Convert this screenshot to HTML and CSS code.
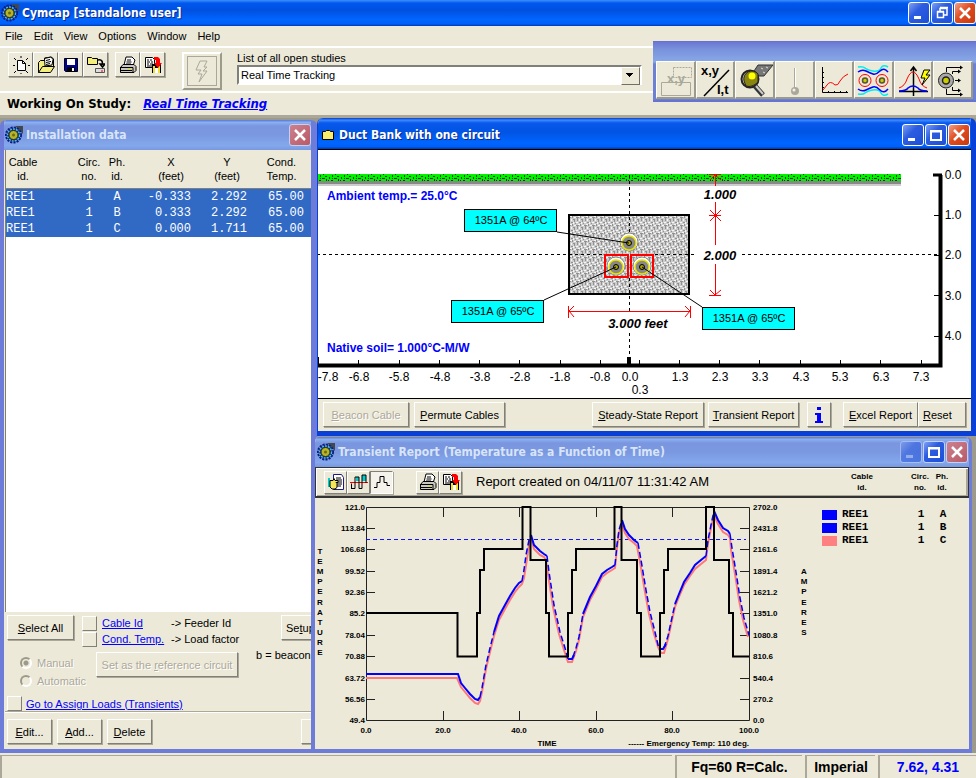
FILE: index.html
```html
<!DOCTYPE html>
<html lang="en">
<head>
<meta charset="utf-8">
<title>Cymcap [standalone user]</title>
<link rel="stylesheet" href="styles.css">
</head>
<body>
<svg class="defs" aria-hidden="true">
  <defs>
    <symbol id="logo" viewBox="0 0 18 18">
      <path d="M10 0h8v8l-3-3z" fill="#3e4a50"/>
      <circle cx="8.500" cy="9" r="7" fill="#103060" stroke="#0a1c80" stroke-width="3" stroke-dasharray="2 1"/>
      <circle cx="8.500" cy="9" r="6" fill="none" stroke="#50b8e8" stroke-width="1.500" stroke-dasharray="2 1"/>
      <circle cx="8.500" cy="9" r="4.500" fill="#b8b428" stroke="#24301c"/>
      <circle cx="8.500" cy="9" r="1.500" fill="#6c6c18"/>
    </symbol>
    <symbol id="printer" viewBox="0 0 18 18">
      <path d="M5 9 7 1h6l3 3-2 6z" fill="#fff" stroke="#000"/>
      <path d="M8 4h4M7.500 6h5M7 8h5" stroke="#000"/>
      <path d="M1.500 11.500 4 8.500h11l2 2v4l-2 2H1.500z" fill="#c8c8c0" stroke="#000"/>
      <path d="M1 11.500h13v5M2 14.500h11" fill="none" stroke="#000"/>
      <path d="M9 13h3" stroke="#e8e000"/>
    </symbol>
    <symbol id="copy" viewBox="0 0 18 18">
      <path d="M1.500 1.500h7l2 2v8h-9z" fill="#fff" stroke="#000"/>
      <path d="M3 4h2M6 4h2M3 6h3M7 6h2M3 8h2M6 8h3M3 10h5" stroke="#000"/>
      <path d="M8 8h9v9H8z" fill="#000"/>
      <path d="M9 10h2v7H9zM14 10h2v7h-2z" fill="#f0e030"/>
      <path d="M11 12h3v5h-3z" fill="#fff"/>
      <path d="M10 1h4l2 2v4h2l-4 5-4-5h2V4h-2z" fill="#f00"/>
    </symbol>
    <symbol id="cable" viewBox="-10 -10 20 20">
      <circle r="9" fill="#fff" stroke="#888"/>
      <circle cy="1" r="7" fill="#888" stroke="#e8e000" stroke-width="1.500"/>
      <circle cy="1" r="2.500" fill="#a8a000" stroke="#000"/>
    </symbol>
    <pattern id="grass" width="12" height="7" patternUnits="userSpaceOnUse">
      <rect width="12" height="7" fill="#00f000"/>
      <path d="M1 1h2v1h-2zM5 2h1v2h-1zM8 0h1v2h-1zM10 3h2v1h-2zM2 4h1v2h-1zM7 5h2v1h-2zM4 5h1v1h-1zM0 3h1v1h-1zM11 6h1v1h-1zM8 3h1v1h-1z" fill="#103810"/>
    </pattern>
    <pattern id="concrete" width="8" height="8" patternUnits="userSpaceOnUse">
      <rect width="8" height="8" fill="#ccc"/>
      <path d="M0 1h3v1h-3zM1 2h1v3h-1zM4 0h1v2h-1zM5 3h2v1h-2zM6 4h1v2h-1zM3 6h2v1h-2zM7 7h1v1h-1z" fill="#909090"/>
      <path d="M2 0h2v1h-2zM3 3h1v2h-1zM0 6h2v1h-2zM6 1h2v1h-2zM5 6h1v2h-1z" fill="#f6f6f6"/>
    </pattern>
  </defs>
</svg>

<header class="titlebar main-title">
  <svg class="logo"><use href="#logo"/></svg>
  <h1>Cymcap [standalone user]</h1>
  <div class="caption-buttons">
    <button class="cap" aria-label="Minimize"><svg viewBox="0 0 20 20"><path d="M5 13h7v3H5z" fill="#fff"/></svg></button>
    <button class="cap" aria-label="Restore"><svg viewBox="0 0 20 20"><path d="M8 8V5.500h7V12h-3M8 4.500h8M5.500 9h6v5.500h-6zM5 8.500h7" fill="none" stroke="#fff" stroke-width="1.500"/></svg></button>
    <button class="cap close" aria-label="Close"><svg viewBox="0 0 20 20"><path d="m5 5 10 10M15 5 5 15" stroke="#fff" stroke-width="2.500"/></svg></button>
  </div>
</header>

<nav class="menu">
  <button>File</button><button>Edit</button><button>View</button><button>Options</button><button>Window</button><button>Help</button>
</nav>

<div class="toolbar">
  <div class="tools">
    <button class="tool" aria-label="New study"><svg viewBox="0 0 18 18"><path d="M5.500 4.500h5l3 3v7h-8z" fill="#fff" stroke="#000"/><path d="M10.500 4.500v3h3M9 0v2M9 17v1M1 9.500h2M16 9.500h2M2 2l2 2M16 2l-2 2M2 17l2-2M16 17l-2-2" fill="none" stroke="#000"/></svg></button>
    <button class="tool" aria-label="Open study"><svg viewBox="0 0 18 18"><path d="M1.500 16.500v-10l2-2h4V2l7-1 2 2v8z" fill="#f4ee7c" stroke="#000"/><path d="M7.500 2.500 14 1l2 2.500-1 5.500-7 1z" fill="#fff" stroke="#000"/><path d="m9 4.500 4-1M9 6.500l5-1M9 8.500l4-1" stroke="#000"/><path d="m1.500 16.500 4-6h12l-4 6z" fill="#f4ee7c" stroke="#000"/></svg></button>
    <button class="tool" aria-label="Save"><svg viewBox="0 0 18 18"><path d="M2.500 2.500h13v13h-12l-1-1z" fill="#0000a8" stroke="#000"/><path d="M5 3h8v6H5z" fill="#fff"/><path d="M5 11h8v4H5z" fill="#000"/><path d="M10 12h2v3h-2z" fill="#fff"/></svg></button>
    <button class="tool" aria-label="Save to disk"><svg viewBox="0 0 18 18"><path d="M.5 8.500v-7h4l1 1h5v6z" fill="#f4ee7c" stroke="#000"/><path d="M8.500 12.500h9v4h-9z" fill="#ddd" stroke="#555"/><path d="M14 15h2" stroke="#e00"/><path d="M11 4c4-1 5 2 4 5m-2-1h5l-2.500 3z" fill="none" stroke="#000" stroke-width="1.500"/></svg></button>
  </div>
  <div class="tools print-tools">
    <button class="tool" aria-label="Print"><svg><use href="#printer"/></svg></button>
    <button class="tool" aria-label="Copy"><svg><use href="#copy"/></svg></button>
  </div>
  <button class="run" aria-label="Run simulation" disabled><svg viewBox="0 0 28 28"><path d="m12 4-4 9h5l-3 4h4l-3 8 8-11h-4l4-4h-3l3-6z" fill="none" stroke="#aaa89a"/></svg></button>
  <div class="studies">
    <label for="study">List of all open studies</label>
    <div class="combo"><select id="study"><option>Real Time Tracking</option></select></div>
  </div>
</div>

<div class="study-line"><strong>Working On Study:</strong><a href="#">Real Time Tracking</a></div>

<div class="palette">
  <div class="palette-tools">
    <button aria-label="Edit coordinates" disabled><svg viewBox="0 0 36 34"><path d="M16.500 4.500h18v10h-18z" fill="none" stroke="#aaa89a" stroke-dasharray="2 1"/><path d="M4.500 19.500h29v13h-29z" fill="none" stroke="#aaa89a"/><text x="10" y="20" class="xy dim">x,y</text></svg></button>
    <button aria-label="Coordinates and load"><svg viewBox="0 0 36 34"><path d="M7 33 32 7" stroke="#000" stroke-width="1.500"/><text x="4" y="12" class="xy">x,y</text><text x="20" y="31" class="xy">I,t</text></svg></button>
    <button aria-label="Inspect cable"><svg viewBox="0 0 36 34"><path d="m17 8 4-6h15l-9 11h-5z" fill="#777" stroke="#333"/><path d="m24 5 2 1m3-2 2 1m-5 4 2 1" stroke="#ddd"/><circle cx="13" cy="16" r="8.500" fill="#d8d4b8" stroke="#222" stroke-width="2"/><path d="M7 18a8 8 0 0 1 14-7v8q-6 6-12 4z" fill="#8a8410" stroke="#222"/><circle cx="15" cy="13" r="3.500" fill="#ff0"/><path d="m18 23 8 9" stroke="#333" stroke-width="5"/><path d="m19 23 7 8" stroke="#ccc" stroke-width="2"/></svg></button>
    <button aria-label="Temperature" disabled><svg viewBox="0 0 36 34"><path d="M18.500 5v20" stroke="#aaa89a"/><path d="M19.500 5v20" stroke="#fff"/><circle cx="19" cy="28" r="4" fill="#aaa89a"/><circle cx="18" cy="27" r="1.500" fill="#f4f2e8"/></svg></button>
    <button aria-label="Line chart"><svg viewBox="0 0 36 34"><path d="M6.500 4v25.500H32M6 9.500h2M6 14.500h2M6 19.500h2M6 24.500h2M12.500 30v-2M18.500 30v-2M24.500 30v-2M30.500 30v-2" fill="none" stroke="#000"/><path d="m7 27 4-5q3-5 8 0 3 1 5-4 3-5 8-7" fill="none" stroke="#f00"/></svg></button>
    <button aria-label="Isotherms"><svg viewBox="0 0 36 34"><path d="M3 4q5-1 7 1t8 3 8-3 7-1M3 31q5 1 7-1t8-3 8 3 7 1" fill="none" stroke="#0ee" stroke-width="1.500"/><path d="M3 9q4-3 8-1t7 3 7-3 8 1M3 26q4 3 8 1t7-3 7 3 8-1" fill="none" stroke="#00f" stroke-width="1.500"/><circle cx="10" cy="17.500" r="6" fill="none" stroke="#f00"/><circle cx="27" cy="17.500" r="6" fill="none" stroke="#f00"/><circle cx="10" cy="17.500" r="2.500" fill="#cc0" stroke="#553" stroke-width="1.500"/><circle cx="27" cy="17.500" r="2.500" fill="#cc0" stroke="#553" stroke-width="1.500"/></svg></button>
    <button aria-label="Field profile"><svg viewBox="0 0 36 34"><path d="M4 28.500h29M18.500 33V4m-3 4 3-4 3 4" fill="none" stroke="#000" stroke-width="1.500"/><path d="M4 25q6-2 8-9 3-7 6-7t6 7q2 7 8 9" fill="none" stroke="#f00"/><path d="M4 28q7 0 9-3 5-4 10 0 2 3 9 3" fill="none" stroke="#00f" stroke-width="1.500"/><path d="m29 7-3 8h4l-3 7 8-10h-4l4-5z" fill="#ff0" stroke="#000"/></svg></button>
    <button aria-label="Current outputs"><svg viewBox="0 0 36 34"><circle cx="11" cy="17.500" r="7.500" fill="#aaa" stroke="#222"/><circle cx="11" cy="17.500" r="3.500" fill="#cc0" stroke="#222" stroke-width="1.500"/><path d="M11.500 9V4.500H27M17.500 11V8.500H25M20 17.500h5M17.500 24v3.500H25M11.500 26v5.500H27" fill="none" stroke="#000"/><path d="m25 2.500 3 2-3 2M23 6.500l3 2-3 2M23 15.500l3 2-3 2M23 25.500l3 2-3 2M25 29.500l3 2-3 2" fill="#000"/></svg></button>
  </div>
</div>

<main class="workspace">
  <section class="window inactive install">
    <div class="titlebar">
      <svg class="logo"><use href="#logo"/></svg>
      <h2>Installation data</h2>
      <div class="caption-buttons"><button class="cap close" aria-label="Close"><svg viewBox="0 0 20 20"><path d="m5 5 10 10M15 5 5 15" stroke="#fff" stroke-width="2.500"/></svg></button></div>
    </div>
    <div class="install-body">
      <div class="list">
        <table>
          <thead><tr><th class="c-id">Cable<br>id.</th><th class="c-circ">Circ.<br>no.</th><th class="c-ph">Ph.<br>id.</th><th class="c-x">X<br>(feet)</th><th class="c-y">Y<br>(feet)</th><th class="c-temp">Cond.<br>Temp.</th></tr></thead>
          <tbody>
            <tr><td>REE1</td><td>1</td><td>A</td><td>-0.333</td><td>2.292</td><td>65.00</td></tr>
            <tr><td>REE1</td><td>1</td><td>B</td><td>0.333</td><td>2.292</td><td>65.00</td></tr>
            <tr><td>REE1</td><td>1</td><td>C</td><td>0.000</td><td>1.711</td><td>65.00</td></tr>
          </tbody>
        </table>
      </div>
      <div class="options">
        <div class="opt-row">
          <button class="btn select-all"><u>S</u>elect All</button>
          <div class="maps">
            <div><button class="box" aria-label="Use cable id"></button><a href="#">Cable Id</a><span>-&gt; Feeder Id</span></div>
            <div><button class="box" aria-label="Use conductor temperature"></button><a href="#">Cond. Temp.</a><span>-&gt; Load factor</span></div>
          </div>
          <button class="btn setup">Se<u>t</u>up</button>
        </div>
        <div class="opt-row mode-row">
          <div class="modes">
            <label><input type="radio" name="mode" checked disabled>Manual</label>
            <label><input type="radio" name="mode" disabled>Automatic</label>
          </div>
          <button class="btn reference" disabled>Set as the <u>r</u>eference circuit</button>
          <span class="beacon">b = beacon</span>
        </div>
        <div class="goto"><button class="box" aria-label="Assign loads"></button><a href="#">Go to Assign Loads (Transients)</a></div>
      </div>
      <div class="actions">
        <button class="btn"><u>E</u>dit...</button><button class="btn"><u>A</u>dd...</button><button class="btn"><u>D</u>elete</button>
        <button class="btn more" aria-label="Close list"></button>
      </div>
    </div>
  </section>

  <div class="right">
    <section class="window duct">
      <div class="titlebar">
        <svg class="folder" viewBox="0 0 12 10"><path d="M.5 9.500v-8h3l1-1h3l1 1h3v8z" fill="#f8ec6c" stroke="#000"/></svg>
        <h2>Duct Bank with one circuit</h2>
        <div class="caption-buttons">
          <button class="cap" aria-label="Minimize"><svg viewBox="0 0 20 20"><path d="M5 13h7v3H5z" fill="#fff"/></svg></button>
          <button class="cap" aria-label="Maximize"><svg viewBox="0 0 20 20"><path d="M5 6h10v9H5zM5 6.500h10" fill="none" stroke="#fff" stroke-width="2"/></svg></button>
          <button class="cap close" aria-label="Close"><svg viewBox="0 0 20 20"><path d="m5 5 10 10M15 5 5 15" stroke="#fff" stroke-width="2.500"/></svg></button>
        </div>
      </div>
      <svg class="drawing" viewBox="318 150 653 248" role="img" aria-label="Duct bank cross-section">
        <rect x="317" y="174" width="584" height="7" fill="url(#grass)"/>
        <rect x="317" y="181" width="584" height="3" fill="#888"/>
        <rect x="317" y="184" width="584" height="2" fill="#ccc"/>
        <rect x="569" y="215" width="120" height="79" fill="url(#concrete)" stroke="#000" stroke-width="2"/>
        <g stroke="#000" stroke-dasharray="3 3">
          <path d="M317 254.500h287M655 254.500h42M742 254.500h198M629.500 175v58M629.500 278v33M629.500 333v25"/>
        </g>
        <g fill="none" stroke="#f00" stroke-width="2"><rect x="605" y="255" width="23" height="22"/><rect x="631" y="255" width="22" height="22"/></g>
        <use href="#cable" x="619" y="232" width="20" height="20"/>
        <use href="#cable" x="606" y="256" width="20" height="20"/>
        <use href="#cable" x="632" y="256" width="20" height="20"/>
        <path d="m557 232 72 11M544 300l72-33M642 267l60 40" stroke="#000" fill="none"/>
        <g fill="none" stroke="#f00">
          <path d="M715.500 176v10M715.500 202v43M715.500 264v31M709 174.500h12M709 295.500h12M709 215.500h12M568 311.500h122M568.500 306v12M690.500 306v12"/>
          <path d="m710 180 5-5 6 5M710 210l11 11M710 221l11-11M710 290l5 5 6-5M574 306l-5 5 5 6M685 306l5 5-5 6"/>
        </g>
        <g fill="#0ff" stroke="#000"><rect x="464.500" y="209.500" width="92" height="22"/><rect x="451.500" y="300.500" width="92" height="22"/><rect x="702.500" y="307.500" width="92" height="22"/></g>
        <g class="tag"><text x="511" y="224">1351A @ 64ºC</text><text x="498" y="315">1351A @ 65ºC</text><text x="749" y="322">1351A @ 65ºC</text></g>
        <g class="soil"><text x="327" y="200">Ambient temp.= 25.0°C</text><text x="327" y="352">Native soil= 1.000°C-M/W</text></g>
        <g class="dim-text"><text x="720" y="199">1.000</text><text x="720" y="260">2.000</text><text x="638" y="328">3.000 feet</text></g>
        <path d="M317 365.500h623.500V175" fill="none" stroke="#000" stroke-width="4"/>
        <path d="M933 175h9" stroke="#000" stroke-width="3"/><path d="M629 357v8" stroke="#000" stroke-width="4"/>
        <path d="M318.500 357v8M358.500 360v5M399.500 360v5M439.500 360v5M479.500 360v5M519.500 360v5M560.500 360v5M600.500 360v5M639.500 360v5M679.500 360v5M719.500 360v5M759.500 360v5M800.500 360v5M840.500 360v5M880.500 360v5M921.500 360v5M934 215.500h6M934 255.500h6M934 295.500h6M934 336.500h6" stroke="#000"/>
        <g class="scale">
          <text x="328" y="381">-7.8</text><text x="359" y="381">-6.8</text><text x="399" y="381">-5.8</text><text x="440" y="381">-4.8</text><text x="480" y="381">-3.8</text><text x="520" y="381">-2.8</text><text x="560" y="381">-1.8</text><text x="600" y="381">-0.8</text><text x="630" y="381">0.0</text><text x="640" y="394">0.3</text><text x="680" y="381">1.3</text><text x="720" y="381">2.3</text><text x="760" y="381">3.3</text><text x="801" y="381">4.3</text><text x="840" y="381">5.3</text><text x="881" y="381">6.3</text><text x="921" y="381">7.3</text>
          <text x="953" y="179">0.0</text><text x="953" y="219">1.0</text><text x="953" y="259">2.0</text><text x="953" y="300">3.0</text><text x="953" y="340">4.0</text>
        </g>
      </svg>
      <div class="duct-actions">
        <button class="btn wide" disabled><u>B</u>eacon Cable</button>
        <button class="btn wider"><u>P</u>ermute Cables</button>
        <button class="btn steady"><u>S</u>teady-State Report</button>
        <button class="btn transient-btn"><u>T</u>ransient Report</button>
        <button class="btn info" aria-label="Information"><svg viewBox="0 0 10 16"><path d="M3 0h4v3H3zM1 6h6v8h2v2H1v-2h2V8H1z" fill="#00f"/></svg></button>
        <button class="btn excel"><u>E</u>xcel Report</button><button class="btn reset"><u>R</u>eset</button>
      </div>
    </section>

    <section class="window inactive report">
      <div class="titlebar">
        <svg class="logo"><use href="#logo"/></svg>
        <h2>Transient Report (Temperature as a Function of Time)</h2>
        <div class="caption-buttons">
          <button class="cap faded" aria-label="Minimize"><svg viewBox="0 0 20 20"><path d="M5 13h7v3H5z" fill="#aab8f0"/></svg></button>
          <button class="cap" aria-label="Maximize"><svg viewBox="0 0 20 20"><path d="M5 6h10v9H5zM5 6.500h10" fill="none" stroke="#fff" stroke-width="2"/></svg></button>
          <button class="cap close" aria-label="Close"><svg viewBox="0 0 20 20"><path d="m5 5 10 10M15 5 5 15" stroke="#fff" stroke-width="2.500"/></svg></button>
        </div>
      </div>
      <div class="report-bar">
        <div class="tools">
          <button class="tool" aria-label="Select cables"><svg viewBox="0 0 18 18"><path d="M6.500 1.500h8l2 3v12h-10z" fill="#fff" stroke="#1a1a80"/><path d="M9 5h5M9 7h6M9 9h6M9 11h6M9 13h5" stroke="#000"/><path d="M1 5h2v9H1z" fill="#0cc"/><path d="M3 7.500h3l1-2 1 2h3v2H9l1 1v4l-2 1.500H5l-2-2z" fill="#f4e858" stroke="#000"/></svg></button>
          <button class="tool" aria-label="Compare curves"><svg viewBox="0 0 18 18"><path d="M6 8V4h3v4M12 8V2h4v6" fill="#0cc"/><path d="M0 9.500h18" stroke="#f00"/><path d="M1.500 15.500v-5M1 15.500h4V4h4v11.500h3V2h4v8" fill="none" stroke="#000"/></svg></button>
          <button class="tool pressed" aria-label="Step curve"><svg viewBox="0 0 18 18"><path d="M1 14.500h3v-5h3v-6h4v6h3v3h3" fill="none" stroke="#000"/></svg></button>
        </div>
        <div class="tools">
          <button class="tool" aria-label="Print report"><svg><use href="#printer"/></svg></button>
          <button class="tool" aria-label="Copy report"><svg><use href="#copy"/></svg></button>
        </div>
        <span class="created">Report created on 04/11/07 11:31:42 AM</span>
        <div class="legend-head"><span>Cable<br>id.</span><span>Circ.<br>no.</span><span>Ph.<br>id.</span></div>
      </div>
      <div class="report-body">
        <svg class="chart" viewBox="316 498 496 250" role="img" aria-label="Temperature and amperes over time">
          <path d="M366.500 507.500h383v213h-383z" fill="none" stroke="#222"/>
          <path d="M443.500 508v9M519.500 508v9M596.500 508v9M672.500 508v9M443.500 720v-9M519.500 720v-9M596.500 720v-9M672.500 720v-9M366 528.500h9M366 549.500h9M366 571.500h9M366 592.500h9M366 613.500h9M366 635.500h9M366 656.500h9M366 678.500h9M366 699.500h9M749 528.500h-9M749 549.500h-9M749 571.500h-9M749 592.500h-9M749 613.500h-9M749 635.500h-9M749 656.500h-9M749 678.500h-9M749 699.500h-9" stroke="#222"/>
          <path d="M366 539.500h380" stroke="#11f" stroke-dasharray="4 3"/>
          <path d="M366 678H457L461 687 465 692 470 698 475 703 478 704 480 701 482 692 486 669 490 652 494 636 499 620 505 609 510 600 515 592 519 587 522 584 524 578 527 559 529 545 531 538 534 549 540 555 544 557 546 560 548 574 553 607 559 634 564 650 568 662H572L576 651 579 640 583 617 590 600 596 589 602 577 607 573 612 570 615 568 617 548 619 533 622 524 625 533 629 539 634 543 637 546 640 562 645 592 649 614 654 634 658 647 661 653H664L668 639 671 625 675 607 679 597 684 585 690 576 695 569 701 564 706 560 708 543 711 528 714 515 718 524 723 532 728 535 730 538 731 550 735 574 739 600 743 620 748 637" fill="none" stroke="#ff7878" stroke-width="2"/>
          <g fill="none" stroke="#00f">
            <path d="M366 674H458L461 683 465 688 470 694 475 699 478 700 480 697M494 632 499 616 505 605 510 596 515 588 519 583 522 581M531 535 534 545 540 551 544 554 547 556M568 659H572L574 655M583 614 590 597 596 586 602 574 607 570 612 567 615 565M622 520 625 529 629 535 634 540 638 543M659 649H663L666 644M675 604 679 594 684 582 690 573 695 565 701 560 706 556M714 511 718 520 723 528 728 531 730 534" stroke-width="2"/>
            <path d="M480 697 482 688 486 665 490 648 494 632M522 581 524 570 526 555 529 540 531 535M547 556 549 572 554 605 560 632 565 648 568 659M573 657 576 648 579 637 583 614M615 565 617 545 619 530 622 520M638 543 641 560 646 590 650 612 655 632 659 649M664 648 668 636 671 622 675 604M706 556 708 540 711 525 714 511M730 534 732 548 736 572 740 598 744 618 749 635" stroke-width="1.500" stroke-dasharray="6 3"/>
          </g>
          <path d="M366 613H457.500V656.500H477V613H480V570H484V549H522.500V507H530.500V560H546V613H549V656.500H568V613H572V570H576V549H614.500V507H621.500V560H637V613H641V656.500H660V613H664V570H668V549H706V507H714V560H729V613H733V656.500H749" fill="none" stroke="#000" stroke-width="2"/>
          <g class="ticks left">
            <text x="365" y="510">121.0</text><text x="365" y="531">113.84</text><text x="365" y="552">106.68</text><text x="365" y="574">99.52</text><text x="365" y="595">92.36</text><text x="365" y="616">85.2</text><text x="365" y="638">78.04</text><text x="365" y="659">70.88</text><text x="365" y="681">63.72</text><text x="365" y="702">56.56</text><text x="365" y="723">49.4</text>
          </g>
          <g class="ticks">
            <text x="753" y="510">2702.0</text><text x="753" y="531">2431.8</text><text x="753" y="552">2161.6</text><text x="753" y="574">1891.4</text><text x="753" y="595">1621.2</text><text x="753" y="616">1351.0</text><text x="753" y="638">1080.8</text><text x="753" y="659">810.6</text><text x="753" y="681">540.4</text><text x="753" y="702">270.2</text><text x="753" y="723">0.0</text>
          </g>
          <g class="ticks mid">
            <text x="366" y="733">0.0</text><text x="443" y="733">20.0</text><text x="519" y="733">40.0</text><text x="596" y="733">60.0</text><text x="672" y="733">80.0</text><text x="749" y="733">100.0</text>
            <text x="547" y="746">TIME</text>
            <text x="320" y="554">T</text><text x="320" y="564">E</text><text x="320" y="574">M</text><text x="320" y="584">P</text><text x="320" y="594">E</text><text x="320" y="605">R</text><text x="320" y="615">A</text><text x="320" y="625">T</text><text x="320" y="635">U</text><text x="320" y="645">R</text><text x="320" y="655">E</text>
            <text x="804" y="574">A</text><text x="804" y="584">M</text><text x="804" y="594">P</text><text x="804" y="605">E</text><text x="804" y="615">R</text><text x="804" y="625">E</text><text x="804" y="635">S</text>
          </g>
          <g class="ticks left"><text x="749" y="746">------ Emergency Temp: 110 deg.</text></g>
        </svg>
        <table class="legend">
          <tr><td><i class="swatch"></i></td><td>REE1</td><td>1</td><td>A</td></tr>
          <tr><td><i class="swatch"></i></td><td>REE1</td><td>1</td><td>B</td></tr>
          <tr><td><i class="swatch pink"></i></td><td>REE1</td><td>1</td><td>C</td></tr>
        </table>
      </div>
    </section>
  </div>
</main>

<footer class="status"><span class="grow"></span><span class="calc">Fq=60 R=Calc.</span><span class="unit">Imperial</span><span class="pos">7.62, 4.31</span></footer>
</body>
</html>
```
FILE: styles.css
```css
* { box-sizing: border-box; }
body {
  margin: 0;
  min-height: 100vh;
  display: flex;
  flex-direction: column;
  position: relative;
  background: #ece9d8;
  color: #000;
  font: 11px/14px "Liberation Sans", Arial, sans-serif;
}
button, select, input { font: inherit; color: inherit; margin: 0; }
button { padding: 0; border: 0; background: none; white-space: nowrap; }
h1, h2 { margin: 0; font: bold 12px/18px "DejaVu Sans Condensed", "Open Sans", sans-serif; white-space: nowrap; }
a { color: #00f; }
.defs { position: absolute; width: 0; height: 0; }

/* Title bars */
.titlebar {
  display: flex;
  align-items: center;
  gap: 3px;
  flex: none;
  height: 30px;
  padding: 0 4px 0 5px;
  color: #fff;
  background: linear-gradient(#0a3cc8, #3a8cff 7%, #0a58ec 16%, #0054e3 45%, #0066ff 80%, #0060f8 92%, #0038b0);
}
.main-title { height: 26px; padding: 0 0 0 1px; background: linear-gradient(#3c90fc, #0058ee 12%, #0050e0 40%, #0066ff 75%, #0060f8 92%, #0038b0); }
.titlebar h1, .titlebar h2 { text-shadow: 1px 1px #0a2a90; }
.inactive .titlebar { color: #d8e4f8; background: linear-gradient(#5a78d8, #8ab0f0 8%, #7a96e0 20%, #7a98e0 50%, #84a8ec 85%, #7898e0); }
.inactive .titlebar h2 { text-shadow: none; }
.logo { width: 18px; height: 18px; flex: none; }
.folder { width: 12px; height: 10px; margin-right: 2px; }
.caption-buttons { margin-left: auto; display: flex; gap: 1px; }
.cap { width: 22px; height: 22px; border: 1px solid #fff; border-radius: 3px; background: linear-gradient(135deg, #7ea0f4, #2c5ce0 40%, #1c50d8); }
.cap svg { display: block; width: 20px; height: 20px; }
.cap.close { background: linear-gradient(135deg, #f0a088, #e04c20 45%, #c83810); }
.inactive .cap { border-color: #c4d0f4; }
.inactive .cap.close { background: linear-gradient(135deg, #cc8090, #b85a66); }
.cap.faded { opacity: .55; }

/* Menu and toolbar */
.menu { display: flex; height: 20px; padding-left: 5px; gap: 11px; align-items: center; }
.toolbar { display: flex; align-items: flex-start; height: 46px; padding: 5px 8px 0; border-top: 2px solid #fff; border-bottom: 1px solid #fff; }
.tools { display: flex; }
.tool { width: 25px; height: 25px; display: grid; place-items: center; border: 1px solid; border-color: #fff #808078 #808078 #fff; box-shadow: 1px 1px #aca899; }
.tool svg { width: 18px; height: 18px; }
.tool.pressed { border-color: #808078 #fff #fff #808078; background: #f4f2ea; }
.print-tools { margin-left: 7px; }
.toolbar .tools { margin-top: -1px; }
.run { width: 40px; height: 38px; margin: -1px 0 0 17px; display: grid; place-items: center; border: 2px solid; border-color: #fff #9c9a8a #9c9a8a #fff; }
.run svg { width: 30px; height: 30px; border: 1px solid #aca899; }
.studies { width: 405px; margin: -2px 0 0 15px; }
.studies label { display: block; line-height: 14px; }
.combo { position: relative; height: 20px; border: 2px solid; border-color: #808078 #fff #fff #808078; background: #fff; }
.combo select { width: 100%; height: 16px; padding: 0 2px; border: 0; background: transparent; appearance: none; display: block; }
.combo::after {
  content: "";
  position: absolute;
  top: 0;
  right: 0;
  width: 17px;
  height: 16px;
  background: linear-gradient(#000, #000) 4px 5px / 7px 1px no-repeat, linear-gradient(#000, #000) 5px 6px / 5px 1px no-repeat, linear-gradient(#000, #000) 6px 7px / 3px 1px no-repeat, linear-gradient(#000, #000) 7px 8px / 1px 1px no-repeat, #ece9d8;
  border: 1px solid;
  border-color: #fff #716f64 #716f64 #fff;
  pointer-events: none;
}
.study-line { display: flex; gap: 12px; height: 26px; padding-left: 7px; border-top: 1px solid #fff; border-bottom: 3px solid #aca899; font: bold 13px/22px "DejaVu Sans Condensed", "Open Sans", sans-serif; }
.study-line a { font-style: italic; }

/* Floating icon palette */
.palette { position: absolute; top: 41px; right: 0; width: 323px; padding: 19px 3px 1px; border: solid #6474d0; border-width: 1px 0 2px; background: linear-gradient(#6c78d4, #7a94dc 8px, #88a8e8 20px, #6c80d4 22px); }
.palette-tools { display: flex; background: #ece9d8; }
.palette button { flex: 1; height: 38px; display: grid; place-items: center; border: solid; border-width: 1px 2px 2px 1px; border-color: #fff #9c9a8a #9c9a8a #fff; }
.palette svg { width: 36px; height: 34px; }
.xy { font: bold 13px "Liberation Sans", sans-serif; }
.xy.dim { fill: #aaa89a; }

/* Windows */
.workspace { flex: 1; display: grid; grid-template-columns: 317px 1fr; align-items: stretch; background: #9c9a8c; }
.window { display: flex; flex-direction: column; border-radius: 6px 6px 0 0; overflow: hidden; background: #ece9d8; min-width: 0; }
.install { margin-top: 2px; border: solid #6c7cd8; border-width: 0 6px 4px 4px; }
.install .titlebar { margin: 0 -6px 0 -4px; padding-right: 6px; }
.install-body { flex: 1; display: flex; flex-direction: column; padding: 0 0 0 1px; overflow: hidden; }
.right { display: flex; flex-direction: column; min-width: 0; }
.duct { border: solid #0840d8; border-width: 0 5px 5px 1px; }
.duct .titlebar { margin: 0 -5px 0 -1px; height: 31px; padding-right: 6px; padding-top: 2px; }
.report { position: relative; flex: 1; margin: 1px 4px 0 -5px; border: solid #6c7cd8; border-width: 0 3px 4px 3px; }
.report .titlebar { margin: 0 -3px; }

/* Buttons */
.btn { height: 25px; padding: 0 2px; flex: none; border: 1px solid; border-color: #fff #808078 #808078 #fff; box-shadow: 1px 1px #aca899; }
.btn:disabled { color: #aca899; text-shadow: 1px 1px #fff; }
.box { width: 15px; height: 15px; flex: none; border: 1px solid; border-color: #fff #808078 #808078 #fff; }

/* Installation data */
.list { flex: 1; background: #fff; border-left: 1px solid #808078; }
.list table { width: 100%; table-layout: fixed; border-collapse: collapse; }
.list thead { background: #ece9d8; }
.list th { height: 38px; padding: 0; font-weight: normal; border-bottom: 1px solid #808078; text-align: center; }
.list .c-id { width: 68px; padding-right: 34px; }
.list .c-circ { width: 30px; }
.list .c-ph { width: 26px; }
.list .c-x { width: 72px; padding-left: 10px; }
.list .c-y { width: 50px; }
.list td { height: 16px; padding: 0; color: #fff; background: #316ac5; font: 12px/16px "Liberation Mono", monospace; text-align: center; }
.list td:first-child { text-align: left; }
.list td:nth-child(4) { text-align: right; padding-right: 11px; }
.list td:nth-child(5) { text-align: right; padding-right: 5px; }
.list td:nth-child(6) { text-align: right; padding-right: 7px; }
.options { padding: 3px 0 0 2px; border-bottom: 1px solid #aca899; white-space: nowrap; }
.opt-row { display: flex; align-items: flex-start; }
.select-all { width: 67px; }
.maps { flex: none; width: 207px; padding-left: 8px; }
.maps div { display: flex; height: 16px; align-items: center; }
.maps a { width: 69px; margin-left: 5px; }
.setup { width: 60px; text-align: left; padding-left: 4px; }
.mode-row { margin-top: 5px; height: 38px; }
.modes { flex: none; width: 89px; padding-left: 13px; margin-top: 2px; color: #aca899; }
.modes label { display: flex; align-items: center; gap: 5px; height: 18px; text-shadow: 1px 1px #fff; }
.modes input { appearance: none; flex: none; width: 12px; height: 12px; border: 2px solid; border-color: #9c9a8a #fff #fff #9c9a8a; border-radius: 50%; }
.modes input:checked { background: radial-gradient(#9c9a8a 2px, transparent 3px); }
.reference { width: 142px; }
.beacon { margin-left: 18px; margin-top: -4px; }
.goto { display: flex; gap: 4px; align-items: center; margin-top: 6px; }
.actions { display: flex; gap: 5px; height: 37px; padding: 6px 0 0 2px; border-top: 1px solid #fff; }
.actions .btn { width: 45px; }
.actions .more { margin-left: auto; width: 10px; border-right: 0; }

/* Duct bank */
.drawing { display: block; width: 100%; height: auto; background: #fff; border-top: 1px solid #000; border-bottom: 1px solid #000; }
.scale { text-anchor: middle; font-size: 12px; }
.tag { font-size: 11px; text-anchor: middle; }
.soil { font: bold 12px "Liberation Sans", sans-serif; fill: #00f; }
.dim-text { font: italic bold 13px "Liberation Sans", sans-serif; text-anchor: middle; }
.duct-actions { display: flex; padding: 3px 5px 4px; }
.duct-actions .wide { width: 86px; margin-right: 5px; }
.duct-actions .wider { width: 91px; }
.duct-actions .steady { width: 112px; margin-left: auto; margin-right: 4px; }
.duct-actions .transient-btn { width: 91px; margin-right: 8px; }
.duct-actions .info { width: 24px; margin-right: 12px; }
.info svg { width: 10px; height: 16px; display: block; margin: auto; }
.duct-actions .excel { width: 75px; }
.duct-actions .reset { width: 48px; padding-left: 4px; text-align: left; }

/* Transient report */
.report-bar { display: flex; align-items: center; height: 31px; padding-left: 8px; gap: 23px; border: 1px solid #333; border-bottom-width: 2px; box-shadow: inset 1px 1px #fff, inset -2px -1px #aca899; }
.report-bar .tool { width: 23px; height: 23px; }
.created { font-size: 13px; margin-left: -9px; white-space: nowrap; }
.legend-head { display: flex; margin-left: auto; padding-right: 15px; font: bold 8px/11px "Liberation Sans", sans-serif; text-align: center; }
.legend-head span { width: 22px; }
.legend-head span:first-child { margin-right: 36px; }
.report-body { flex: 1; display: flex; align-items: flex-start; gap: 10px; padding: 0 15px 0 1px; }
.chart { display: block; flex: 496 1 0; min-width: 0; height: auto; }
.ticks { font: bold 8px "Liberation Sans", sans-serif; }
.ticks.left { text-anchor: end; }
.ticks.mid { text-anchor: middle; }
.legend { flex: 132 1 0; table-layout: fixed; border-collapse: collapse; margin-top: 10px; font: bold 11px/13px "Liberation Mono", monospace; }
.legend td { padding: 0; height: 13px; text-align: center; }
.legend td:first-child { width: 20px; }
.legend td:nth-child(2) { text-align: left; }
.legend td:nth-child(n+3) { width: 22px; }
.swatch { display: block; width: 15px; height: 10px; background: #00f; }
.swatch.pink { background: #ff8080; }

/* Status bar */
.status { display: flex; gap: 3px; height: 25px; padding-top: 2px; font: bold 14px/22px "Liberation Sans", sans-serif; }
.status span { border: solid #aca899; border-width: 1px 0 0 2px; text-align: center; }
.grow { flex: 1; }
.calc { width: 127px; }
.unit { width: 70px; }
.pos { width: 98px; color: #00f; }
```
